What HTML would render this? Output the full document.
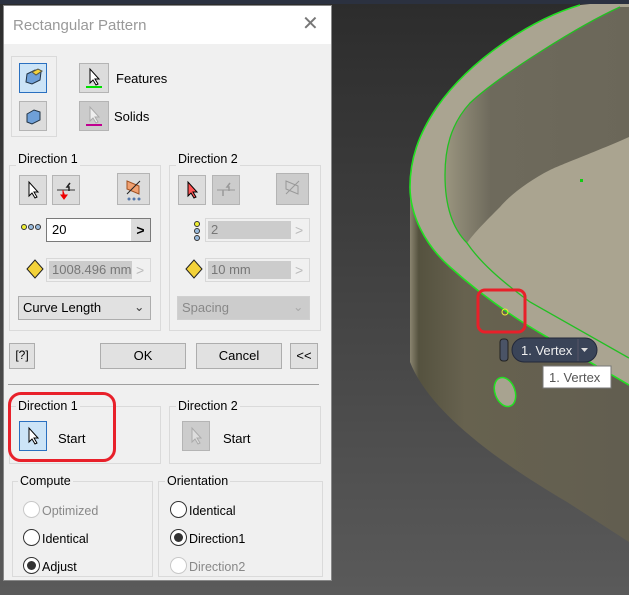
<!DOCTYPE html>
<html><head><style>
*{box-sizing:border-box;margin:0;padding:0}
body{width:629px;height:595px;overflow:hidden;position:relative;background:#3a3a3a;font-family:"Liberation Sans",sans-serif;font-size:12.5px;color:#000}
.a{position:absolute}
.btn{position:absolute;background:#dcdcdc;border:1px solid #b4b4b4}
.sel{background:#cce4f7;border:1px solid #2a70c0}
.grp{position:absolute;border:1px solid #dadada}
.lbl{position:absolute;background:#f0f0f0;padding:0 2px;font-size:12.5px;line-height:14px}
.t{position:absolute;white-space:nowrap;line-height:14px}
.rad{position:absolute;width:17px;height:17px;border-radius:50%;border:1px solid #333;background:#fff}
.rad.dis{border-color:#c8c8c8}
.rad.on::after{content:"";position:absolute;left:3px;top:3px;width:9px;height:9px;border-radius:50%;background:#333}
.pb{position:absolute;background:#e1e1e1;border:1px solid #adadad;text-align:center;line-height:23px;font-size:13px}
</style></head><body>
<svg class="a" style="left:0;top:0" width="629" height="595">
<defs>
<linearGradient id="bg" x1="0" y1="0" x2="0" y2="1"><stop offset="0" stop-color="#2c2c2c"/><stop offset="1" stop-color="#5a5a5a"/></linearGradient>
<linearGradient id="wall" x1="0" y1="0" x2="1" y2="0"><stop offset="0" stop-color="#8a8570"/><stop offset="0.04" stop-color="#55523f"/><stop offset="0.25" stop-color="#67624f"/><stop offset="1" stop-color="#625e50"/></linearGradient>
<linearGradient id="inw" x1="0" y1="0" x2="1" y2="0"><stop offset="0" stop-color="#9a957f"/><stop offset="0.25" stop-color="#6e6a5c"/><stop offset="1" stop-color="#6b6759"/></linearGradient>
</defs>
<rect width="629" height="595" fill="url(#bg)"/>
<rect x="0" y="0" width="629" height="4" fill="#2b3140"/>
<path d="M410,187 L410,362 C425,400 470,445 567,502 L629,542 L629,300 L450,267 Z" fill="url(#wall)"/>
<path d="M580,5 C530,20 470,60 437,107 C418,135 410,160 410,187 C410,215 425,245 450,267 C470,285 500,310 547,337 L629,385 L629,4 L590,4 Z" fill="#aaa491"/>
<path d="M620,7 C580,25 500,75 470,103 C450,125 445,150 445,175 C445,205 452,228 467,243 C480,262 500,280 530,302 L629,358 L629,7 Z" fill="url(#inw)"/>
<path d="M629,137 C600,150 560,165 550,170 C530,180 510,195 500,207 C485,222 475,232 467,243 C480,262 500,280 530,302 L629,358 Z" fill="#aaa490"/>
<path d="M580,5 C530,20 470,60 437,107 C418,135 410,160 410,187 C410,215 425,245 450,267 C470,285 500,310 547,337 L629,385" fill="none" stroke="#22e022" stroke-width="1.6"/>
<path d="M620,7 C580,25 500,75 470,103 C450,125 445,150 445,175 C445,205 452,228 467,243 C480,262 500,280 530,302 L629,358" fill="none" stroke="#22c022" stroke-width="1.3"/>
<rect x="580" y="179" width="3" height="3" fill="#1c1"/>
<ellipse cx="505" cy="392" rx="10" ry="15" fill="#a8a390" transform="rotate(-20 505 392)"/>
<ellipse cx="505" cy="392" rx="10" ry="15" fill="none" stroke="#22e022" stroke-width="1.5" transform="rotate(-20 505 392)"/>
<circle cx="505" cy="312" r="3" fill="none" stroke="#ee3"/>
<rect x="478" y="290" width="47" height="42" rx="7" fill="none" stroke="#e8202a" stroke-width="3"/>
<rect x="500" y="339" width="8" height="22" rx="3" fill="#4a5366" stroke="#222"/>
<rect x="512" y="338" width="85" height="24" rx="12" fill="#3a4458" stroke="#22283a"/>
<text x="521" y="355" fill="#f0f0f0" font-family="Liberation Sans" font-size="13">1. Vertex</text>
<path d="M578,339 V361" stroke="#556"/><path d="M581,348 h7 l-3.5,4z" fill="#ddd"/>
<rect x="543" y="366" width="68" height="22" fill="#fff" stroke="#777"/>
<text x="549" y="382" fill="#555" font-family="Liberation Sans" font-size="13">1. Vertex</text>
</svg>

<div class="a" style="left:3px;top:5px;width:329px;height:576px;background:#f0f0f0;border:1px solid #888">
 <div class="a" style="left:0;top:0;width:327px;height:38px;background:#fff"></div>
</div>
<div class="t" style="left:13px;top:17px;font-size:15px;color:#999;line-height:17px">Rectangular Pattern</div>
<div class="t" style="left:302px;top:13px;font-size:20px;color:#777;line-height:22px">✕</div>

<div class="grp" style="left:11px;top:56px;width:46px;height:81px"></div>
<div class="btn sel" style="left:19px;top:63px;width:28px;height:30px"><svg width="26" height="28"><path d="M7,10 l8,-4 6,2 -1,8 -8,4 -6,-2z" fill="#6fa0d8" stroke="#234"/><path d="M12,8 l6,-3 4,2 -6,4z" fill="#f3d23a" stroke="#554"/></svg></div>
<div class="btn" style="left:19px;top:101px;width:28px;height:30px"><svg width="26" height="28"><path d="M7,12 l7,-4 6,2 0,8 -8,4 -5,-2z" fill="#6fa0d8" stroke="#234"/></svg></div>
<div class="btn" style="left:79px;top:63px;width:30px;height:30px"><svg width="28" height="28"><path d="M10,5 v14 l3,-3 3,5 2,-1 -3,-5 4,0z" fill="#fff" stroke="#000"/><rect x="6" y="22" width="16" height="2" fill="#00e000"/></svg></div>
<div class="t" style="left:116px;top:72px;font-size:13px">Features</div>
<div class="btn" style="left:79px;top:101px;width:30px;height:30px;background:#ccc"><svg width="28" height="28"><path d="M10,5 v14 l3,-3 3,5 2,-1 -3,-5 4,0z" fill="#eee" stroke="#aaa"/><rect x="6" y="22" width="16" height="2" fill="#c00090"/></svg></div>
<div class="t" style="left:114px;top:110px;font-size:13px">Solids</div>

<div class="grp" style="left:9px;top:165px;width:152px;height:166px"></div>
<div class="lbl" style="left:16px;top:152px">Direction 1</div>
<div class="grp" style="left:169px;top:165px;width:152px;height:166px"></div>
<div class="lbl" style="left:176px;top:152px">Direction 2</div>

<div class="btn" style="left:19px;top:175px;width:28px;height:30px"><svg width="26" height="28"><path d="M9,6 v14 l3,-3 3,5 2,-1 -3,-5 4,0z" fill="#fff" stroke="#000"/></svg></div>
<div class="btn" style="left:52px;top:175px;width:28px;height:30px"><svg width="26" height="28"><path d="M4,14h18" stroke="#333"/><path d="M17,7 l-3,4 h2 v4" stroke="#222" fill="none" stroke-width="1.5"/><path d="M10,14 v5 h-2 l3,4 3,-4 h-2" fill="#e00" stroke="#e00"/></svg></div>
<div class="btn" style="left:117px;top:173px;width:33px;height:32px"><svg width="31" height="30"><path d="M9,7 l12,5 v8 l-12,-5z" fill="#f0a070" stroke="#a05020"/><path d="M9,20 L22,7" stroke="#222"/><circle cx="11" cy="25" r="1.5" fill="#57a"/><circle cx="16" cy="25" r="1.5" fill="#57a"/><circle cx="21" cy="25" r="1.5" fill="#57a"/></svg></div>

<div class="btn" style="left:178px;top:175px;width:28px;height:30px"><svg width="26" height="28"><path d="M9,6 v14 l3,-3 3,5 2,-1 -3,-5 4,0z" fill="#f55" stroke="#000"/></svg></div>
<div class="btn" style="left:212px;top:175px;width:28px;height:30px;background:#ccc"><svg width="26" height="28"><path d="M4,14h18" stroke="#999"/><path d="M17,7 l-3,4 h2 v4 M10,14v6" stroke="#999" fill="none" stroke-width="1.5"/></svg></div>
<div class="btn" style="left:276px;top:173px;width:33px;height:32px;background:#ccc"><svg width="31" height="30"><path d="M9,7 l12,5 v8 l-12,-5z" fill="none" stroke="#999"/><path d="M9,20 L22,7" stroke="#999"/></svg></div>

<svg class="a" style="left:20px;top:222px" width="24" height="12"><circle cx="4" cy="5" r="2.5" fill="#ee3" stroke="#333"/><circle cx="11" cy="5" r="2.5" fill="#9bd" stroke="#333"/><circle cx="18" cy="5" r="2.5" fill="#9bd" stroke="#333"/></svg>
<div class="a" style="left:46px;top:218px;width:105px;height:24px;background:#fff;border:1px solid #7a7a7a"><div class="t" style="left:5px;top:4px;font-size:13px">20</div><div class="a" style="left:84px;top:0;width:19px;height:22px;background:#dcdcdc;font-weight:bold;text-align:center;line-height:22px;font-size:14px">&gt;</div></div>
<svg class="a" style="left:24px;top:256px" width="22" height="26"><path d="M3,13 l8,-9 8,9 -8,9z" fill="#f3d23a" stroke="#222"/></svg>
<div class="a" style="left:46px;top:258px;width:105px;height:24px;background:#f0f0f0;border:1px solid #d8d8d8"><div class="a" style="left:2px;top:2px;width:83px;height:18px;background:#ccc"></div><div class="t" style="left:5px;top:4px;font-size:13px;color:#777">1008.496 mm</div><div class="t" style="left:89px;top:4px;color:#bbb;font-size:14px">&gt;</div></div>
<div class="a" style="left:18px;top:296px;width:133px;height:24px;background:#e1e1e1;border:1px solid #adadad"><div class="t" style="left:4px;top:4px;font-size:13px">Curve Length</div><div class="t" style="left:115px;top:3px;color:#444">⌄</div></div>

<svg class="a" style="left:190px;top:220px" width="16" height="32"><circle cx="7" cy="4" r="2.5" fill="#ee3" stroke="#333"/><circle cx="7" cy="11" r="2.5" fill="#9bd" stroke="#333"/><circle cx="7" cy="18" r="2.5" fill="#9bd" stroke="#333"/></svg>
<div class="a" style="left:205px;top:218px;width:105px;height:24px;background:#f0f0f0;border:1px solid #d8d8d8"><div class="a" style="left:2px;top:2px;width:83px;height:18px;background:#ccc"></div><div class="t" style="left:5px;top:4px;font-size:13px;color:#777">2</div><div class="t" style="left:89px;top:4px;color:#bbb;font-size:14px">&gt;</div></div>
<svg class="a" style="left:183px;top:256px" width="22" height="26"><path d="M3,13 l8,-9 8,9 -8,9z" fill="#f3d23a" stroke="#222"/></svg>
<div class="a" style="left:205px;top:258px;width:105px;height:24px;background:#f0f0f0;border:1px solid #d8d8d8"><div class="a" style="left:2px;top:2px;width:83px;height:18px;background:#ccc"></div><div class="t" style="left:5px;top:4px;font-size:13px;color:#777">10 mm</div><div class="t" style="left:89px;top:4px;color:#bbb;font-size:14px">&gt;</div></div>
<div class="a" style="left:177px;top:296px;width:133px;height:24px;background:#ccc;border:1px solid #d0d0d0"><div class="t" style="left:4px;top:4px;font-size:13px;color:#888">Spacing</div><div class="t" style="left:115px;top:3px;color:#aaa">⌄</div></div>

<div class="pb" style="left:9px;top:343px;width:26px;height:26px;font-size:12px;line-height:22px">[?]</div>
<div class="pb" style="left:100px;top:343px;width:86px;height:26px">OK</div>
<div class="pb" style="left:196px;top:343px;width:86px;height:26px">Cancel</div>
<div class="pb" style="left:290px;top:343px;width:28px;height:26px">&lt;&lt;</div>
<div class="a" style="left:8px;top:384px;width:311px;height:1px;background:#a0a0a0"></div>

<div class="grp" style="left:9px;top:406px;width:152px;height:58px"></div>
<div class="lbl" style="left:16px;top:399px">Direction 1</div>
<div class="btn sel" style="left:19px;top:421px;width:28px;height:30px"><svg width="26" height="28"><path d="M9,6 v14 l3,-3 3,5 2,-1 -3,-5 4,0z" fill="#fff" stroke="#000"/></svg></div>
<div class="t" style="left:58px;top:432px;font-size:13px">Start</div>
<div class="a" style="left:8px;top:392px;width:108px;height:70px;border:3px solid #e8202a;border-radius:13px"></div>

<div class="grp" style="left:169px;top:406px;width:152px;height:58px"></div>
<div class="lbl" style="left:176px;top:399px">Direction 2</div>
<div class="btn" style="left:182px;top:421px;width:28px;height:30px;background:#ccc"><svg width="26" height="28"><path d="M9,6 v14 l3,-3 3,5 2,-1 -3,-5 4,0z" fill="#ddd" stroke="#aaa"/></svg></div>
<div class="t" style="left:223px;top:432px;font-size:13px">Start</div>

<div class="grp" style="left:12px;top:481px;width:141px;height:96px"></div>
<div class="lbl" style="left:18px;top:474px">Compute</div>
<div class="rad dis" style="left:23px;top:501px"></div><div class="t" style="left:42px;top:504px;color:#888">Optimized</div>
<div class="rad" style="left:23px;top:529px"></div><div class="t" style="left:42px;top:532px">Identical</div>
<div class="rad on" style="left:23px;top:557px"></div><div class="t" style="left:42px;top:560px">Adjust</div>

<div class="grp" style="left:158px;top:481px;width:165px;height:96px"></div>
<div class="lbl" style="left:165px;top:474px">Orientation</div>
<div class="rad" style="left:170px;top:501px"></div><div class="t" style="left:189px;top:504px">Identical</div>
<div class="rad on" style="left:170px;top:529px"></div><div class="t" style="left:189px;top:532px">Direction1</div>
<div class="rad dis" style="left:170px;top:557px"></div><div class="t" style="left:189px;top:560px;color:#888">Direction2</div>
</body></html>
